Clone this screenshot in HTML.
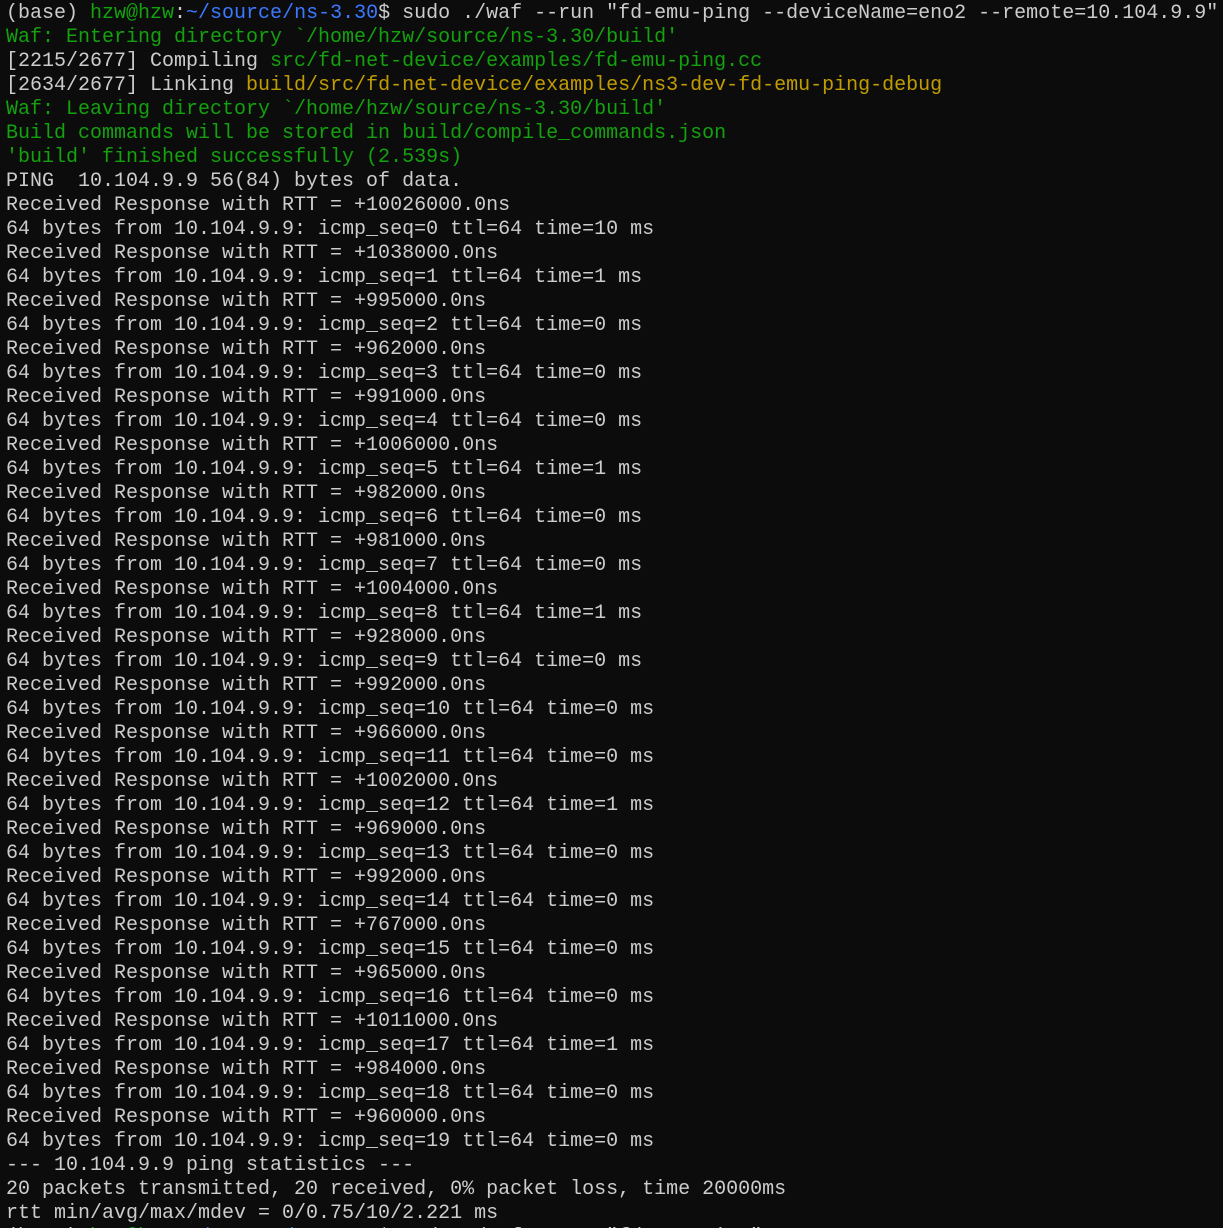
<!DOCTYPE html>
<html><head><meta charset="utf-8"><style>
html,body{margin:0;padding:0;background:#0c0c0c;width:1223px;height:1228px;overflow:hidden;position:relative}
pre{margin:0;position:absolute;left:6px;top:2px;font-family:"Liberation Mono",monospace;font-size:20px;line-height:24px;color:#cccccc;white-space:pre;height:1226px;overflow:hidden}
.g{color:#13a10e}.y{color:#c19c00}.b{color:#3b78ff}
</style></head><body><pre>(base) <span class="g">hzw@hzw</span>:<span class="b">~/source/ns-3.30</span>$ sudo ./waf --run "fd-emu-ping --deviceName=eno2 --remote=10.104.9.9"
<span class="g">Waf: Entering directory `/home/hzw/source/ns-3.30/build'</span>
[2215/2677] Compiling <span class="g">src/fd-net-device/examples/fd-emu-ping.cc</span>
[2634/2677] Linking <span class="y">build/src/fd-net-device/examples/ns3-dev-fd-emu-ping-debug</span>
<span class="g">Waf: Leaving directory `/home/hzw/source/ns-3.30/build'</span>
<span class="g">Build commands will be stored in build/compile_commands.json</span>
<span class="g">'build' finished successfully (2.539s)</span>
PING  10.104.9.9 56(84) bytes of data.
Received Response with RTT = +10026000.0ns
64 bytes from 10.104.9.9: icmp_seq=0 ttl=64 time=10 ms
Received Response with RTT = +1038000.0ns
64 bytes from 10.104.9.9: icmp_seq=1 ttl=64 time=1 ms
Received Response with RTT = +995000.0ns
64 bytes from 10.104.9.9: icmp_seq=2 ttl=64 time=0 ms
Received Response with RTT = +962000.0ns
64 bytes from 10.104.9.9: icmp_seq=3 ttl=64 time=0 ms
Received Response with RTT = +991000.0ns
64 bytes from 10.104.9.9: icmp_seq=4 ttl=64 time=0 ms
Received Response with RTT = +1006000.0ns
64 bytes from 10.104.9.9: icmp_seq=5 ttl=64 time=1 ms
Received Response with RTT = +982000.0ns
64 bytes from 10.104.9.9: icmp_seq=6 ttl=64 time=0 ms
Received Response with RTT = +981000.0ns
64 bytes from 10.104.9.9: icmp_seq=7 ttl=64 time=0 ms
Received Response with RTT = +1004000.0ns
64 bytes from 10.104.9.9: icmp_seq=8 ttl=64 time=1 ms
Received Response with RTT = +928000.0ns
64 bytes from 10.104.9.9: icmp_seq=9 ttl=64 time=0 ms
Received Response with RTT = +992000.0ns
64 bytes from 10.104.9.9: icmp_seq=10 ttl=64 time=0 ms
Received Response with RTT = +966000.0ns
64 bytes from 10.104.9.9: icmp_seq=11 ttl=64 time=0 ms
Received Response with RTT = +1002000.0ns
64 bytes from 10.104.9.9: icmp_seq=12 ttl=64 time=1 ms
Received Response with RTT = +969000.0ns
64 bytes from 10.104.9.9: icmp_seq=13 ttl=64 time=0 ms
Received Response with RTT = +992000.0ns
64 bytes from 10.104.9.9: icmp_seq=14 ttl=64 time=0 ms
Received Response with RTT = +767000.0ns
64 bytes from 10.104.9.9: icmp_seq=15 ttl=64 time=0 ms
Received Response with RTT = +965000.0ns
64 bytes from 10.104.9.9: icmp_seq=16 ttl=64 time=0 ms
Received Response with RTT = +1011000.0ns
64 bytes from 10.104.9.9: icmp_seq=17 ttl=64 time=1 ms
Received Response with RTT = +984000.0ns
64 bytes from 10.104.9.9: icmp_seq=18 ttl=64 time=0 ms
Received Response with RTT = +960000.0ns
64 bytes from 10.104.9.9: icmp_seq=19 ttl=64 time=0 ms
--- 10.104.9.9 ping statistics ---
20 packets transmitted, 20 received, 0% packet loss, time 20000ms
rtt min/avg/max/mdev = 0/0.75/10/2.221 ms
(base) <span class="g">hzw@hzw</span>:<span class="b">~/source/ns-3.30</span>$ sudo ./waf --run "fd-emu-ping"</pre></body></html>
